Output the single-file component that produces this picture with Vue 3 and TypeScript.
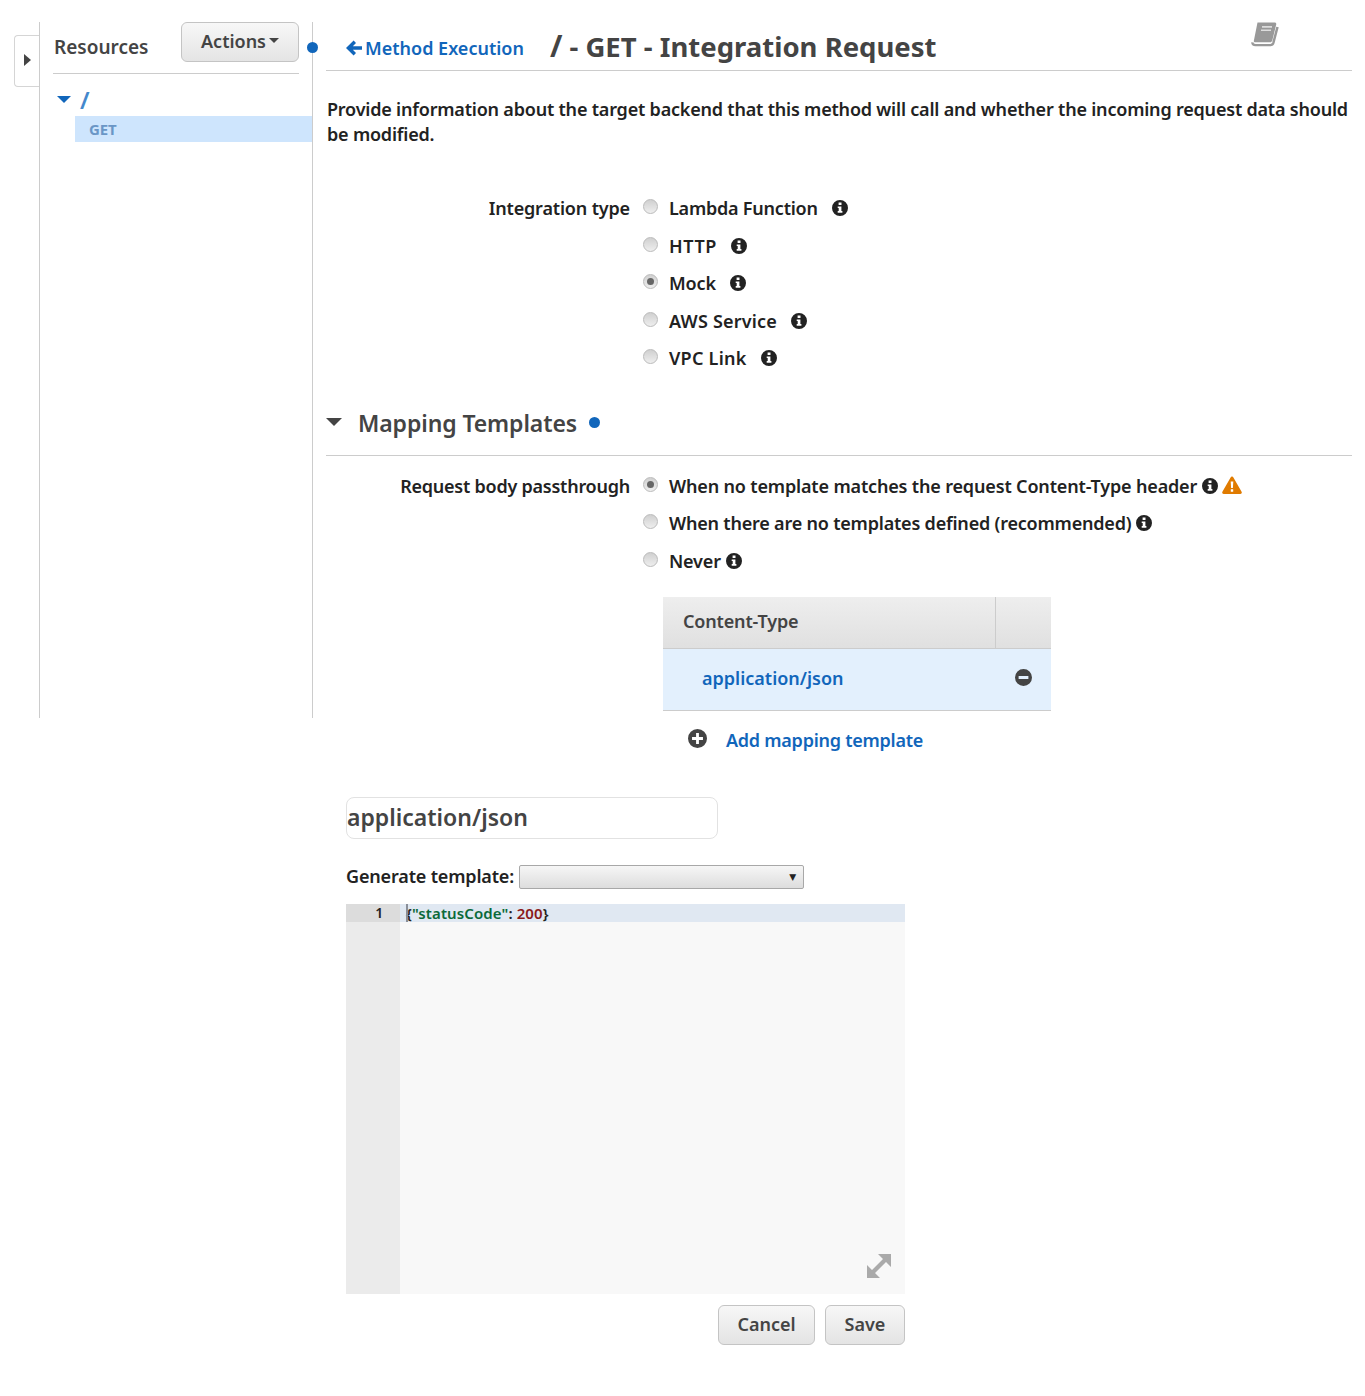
<script setup lang="ts">
import { ref } from "vue";

interface Option {
  label: string;
  tracking?: string;
  warn?: boolean;
}

// the fallback font runs a bit off per label, so each row carries its own tracking
const integrationTypes: Option[] = [
  { label: "Lambda Function", tracking: "-0.22px" },
  { label: "HTTP", tracking: "0.6px" },
  { label: "Mock" },
  { label: "AWS Service", tracking: "0.2px" },
  { label: "VPC Link", tracking: "0.25px" },
];

const passthroughOptions: Option[] = [
  { label: "When no template matches the request Content-Type header", warn: true },
  { label: "When there are no templates defined (recommended)", tracking: "-0.2px" },
  { label: "Never" },
];

const integrationType = ref("Mock");
const passthrough = ref(passthroughOptions[0].label);
const templateName = ref("application/json");
</script>

<template>
  <svg class="defs" aria-hidden="true">
    <symbol id="icon-info" viewBox="0 0 16 16">
      <path
        fill-rule="evenodd"
        d="M8 0a8 8 0 1 1 0 16A8 8 0 0 1 8 0ZM6.600 2.600v2.500h2.900V2.600ZM5.700 6.400v1.600h1v3.100h-1v1.600h4.700v-1.600h-1V6.400Z"
      />
    </symbol>
    <symbol id="icon-minus" viewBox="0 0 16 16">
      <path fill-rule="evenodd" d="M8 0a8 8 0 1 1 0 16A8 8 0 0 1 8 0ZM3.400 6.600v2.800h9.200V6.600Z" />
    </symbol>
    <symbol id="icon-plus" viewBox="0 0 16 16">
      <path
        fill-rule="evenodd"
        d="M8 0a8 8 0 1 1 0 16A8 8 0 0 1 8 0ZM6.800 3.400v3.400H3.400v2.400h3.400v3.400h2.400V9.200h3.400V6.800H9.200V3.400Z"
      />
    </symbol>
  </svg>

  <div class="page">
    <div class="drawer-tab">
      <span class="tab-arrow"></span>
    </div>

    <aside class="sidebar">
      <div class="sidebar-head">
        <h2 class="sidebar-title">Resources</h2>
        <button class="btn actions" type="button">Actions<span class="caret"></span></button>
      </div>
      <div class="tree-root">
        <span class="tree-arrow"></span>
        <a class="tree-slash">/</a>
      </div>
      <div class="tree-method">GET</div>
      <span class="rail-dot"></span>
    </aside>

    <main class="main">
      <header class="title-bar">
        <a class="back-link">
          <svg class="back-icon" viewBox="0 0 16 16">
            <path d="M7.600 .6 0 8l7.600 7.400 2.400-2.400L6.800 9.800H16V6.200H6.800L10 3Z" />
          </svg>
          Method Execution
        </a>
        <h1 class="page-title"><span class="title-slash">/</span> - GET - Integration Request</h1>
        <svg class="book" viewBox="0 0 30 28" preserveAspectRatio="none">
          <path
            d="M7.500 1.500h17c1.400 0 2.100 1 1.700 2.300L22.300 21c-.4 1.300-1.500 2-2.800 2H5.500c-1.500 0-2-.9-1.600-2.100Z"
            fill="#999"
          />
          <path
            d="M27.500 6.500 23.400 23.500c-.4 1.500-1.600 2.500-3.200 2.500H5.500c-2 0-3.300-1.200-3-3"
            fill="none"
            stroke="#999"
            stroke-width="2.500"
          />
          <path d="M12 6.300h10M11 10h10" stroke="#ddd" stroke-width="1.700" />
        </svg>
      </header>

      <p class="intro">
        Provide information about the target backend that this method will call and whether the incoming request data
        should be modified.
      </p>

      <section class="form-group integration">
        <div class="form-label">Integration type</div>
        <div class="options">
          <label v-for="opt in integrationTypes" :key="opt.label" class="option">
            <input v-model="integrationType" class="radio" type="radio" name="integration" :value="opt.label" />
            <span :style="{ letterSpacing: opt.tracking }">{{ opt.label }}</span>
            <svg class="info wide"><use href="#icon-info" /></svg>
          </label>
        </div>
      </section>

      <div class="section-head">
        <span class="section-arrow"></span>
        <h3 class="section-title">Mapping Templates</h3>
        <span class="section-dot"></span>
      </div>

      <section class="form-group passthrough">
        <div class="form-label">Request body passthrough</div>
        <div class="options">
          <label v-for="opt in passthroughOptions" :key="opt.label" class="option">
            <input v-model="passthrough" class="radio" type="radio" name="passthrough" :value="opt.label" />
            <span :style="{ letterSpacing: opt.tracking }">{{ opt.label }}</span>
            <svg class="info"><use href="#icon-info" /></svg>
            <svg v-if="opt.warn" class="warn" viewBox="0 0 20 18">
              <path
                d="M10 .5c.7 0 1.100.4 1.400 1l8.200 14.300c.6 1-.1 2.200-1.200 2.200H1.600C.5 18-.2 16.800.4 15.800L8.600 1.500c.3-.6.700-1 1.400-1Z"
                fill="#e07b00"
              />
              <path d="M8.700 5.500h2.600l-.4 6.500H9.100ZM8.800 13.300h2.400v2.400H8.800Z" fill="#fff" />
            </svg>
          </label>
        </div>
      </section>

      <div class="content-types">
        <div class="ct-head">
          <div class="ct-head-cell">Content-Type</div>
          <div class="ct-head-action"></div>
        </div>
        <div class="ct-row">
          <a class="ct-link">application/json</a>
          <svg class="ct-remove"><use href="#icon-minus" /></svg>
        </div>
      </div>
      <div class="add-template">
        <svg class="add-icon"><use href="#icon-plus" /></svg>
        <a class="add-link">Add mapping template</a>
      </div>

      <div class="template-editor">
        <input v-model="templateName" class="template-name" type="text" />
        <div class="generate">
          <label class="generate-label">Generate template:</label>
          <div class="select-box"><span class="select-arrow">▼</span></div>
        </div>
        <div class="code">
          <div class="gutter"><div class="gutter-active">1</div></div>
          <div class="code-body">
            <div class="code-line">
              <span class="cursor"></span>{<span class="code-key">"statusCode"</span>:
              <span class="code-num">200</span>}
            </div>
            <svg class="expand" viewBox="0 0 24 24">
              <path d="M11 0H24V13L19 8 8 19 13 24H0V11L5 16 16 5Z" />
            </svg>
          </div>
        </div>
        <div class="footer-buttons">
          <button class="btn cancel" type="button">Cancel</button>
          <button class="btn save" type="button">Save</button>
        </div>
      </div>
    </main>
  </div>
</template>

<style>
body {
  background: #fff;
}
</style>

<style scoped>
.defs {
  position: absolute;
  width: 0;
  height: 0;
}

.page {
  display: flex;
  align-items: flex-start;
  height: 1396px;
  padding: 22px 13px 0 14px;
  box-sizing: border-box;
  font-family: "Noto Sans", "Open Sans", sans-serif;
  font-weight: 600;
  font-size: 18px;
  letter-spacing: -0.16px;
  color: #222;
}

a {
  color: #1166bb;
}

.drawer-tab {
  flex: none;
  width: 15px;
  height: 50px;
  margin-top: 13px;
  padding-left: 9px;
  border: 1px solid #d5d5d5;
  border-right: 0;
  border-radius: 4px 0 0 4px;
  display: flex;
  align-items: center;
}

.tab-arrow {
  width: 0;
  height: 0;
  margin-top: -2px;
  border-left: 7px solid #444;
  border-top: 6px solid transparent;
  border-bottom: 6px solid transparent;
}

.sidebar {
  position: relative;
  flex: none;
  width: 274px;
  height: 696px;
  box-sizing: border-box;
  border-left: 1px solid #ccc;
  border-right: 1px solid #ccc;
  padding-left: 13px;
  margin-right: 13px;
}

.sidebar-head {
  display: flex;
  justify-content: space-between;
  align-items: flex-start;
  width: 246px;
  height: 52px;
  border-bottom: 1px solid #ccc;
  box-sizing: border-box;
}

.sidebar-title {
  margin: 11px 0 0 1px;
  font-size: 19px;
  font-weight: 600;
  line-height: 28px;
  letter-spacing: 0;
  color: #444;
}

.btn {
  font-family: inherit;
  font-weight: 600;
  font-size: 18px;
  color: #444;
  border: 1px solid #c4c4c4;
  border-radius: 6px;
  background: linear-gradient(#f7f7f7, #e4e4e4);
  padding: 0 0 2px;
  height: 40px;
  box-sizing: border-box;
}

.actions {
  width: 118px;
  display: flex;
  align-items: center;
  justify-content: center;
  padding-bottom: 3px;
}

.caret {
  margin-left: 3px;
  width: 0;
  height: 0;
  border-top: 5px solid #444;
  border-left: 5px solid transparent;
  border-right: 5px solid transparent;
}

.tree-root {
  display: flex;
  align-items: center;
  height: 42px;
  padding: 9px 0 0 4px;
  box-sizing: border-box;
}

.tree-arrow {
  width: 0;
  height: 0;
  border-top: 7px solid #1166bb;
  border-left: 7px solid transparent;
  border-right: 7px solid transparent;
  margin-right: 9px;
}

.tree-slash {
  font-size: 24px;
  line-height: 28px;
  color: #4488cc;
}

.tree-method {
  height: 26px;
  line-height: 26px;
  margin-left: 22px;
  padding-left: 14px;
  background: #cee5fd;
  color: #6a96c6;
  font-size: 15px;
  font-weight: 700;
}

.rail-dot {
  position: absolute;
  right: -6px;
  top: 20px;
  width: 11px;
  height: 11px;
  border-radius: 50%;
  background: #1166bb;
}

.main {
  flex: 1;
  min-width: 0;
}

.title-bar {
  position: relative;
  display: flex;
  align-items: flex-end;
  height: 49px;
  border-bottom: 1px solid #ccc;
  box-sizing: border-box;
  padding-left: 20px;
}

.back-link {
  display: flex;
  align-items: center;
  font-size: 18px;
  line-height: 24px;
  letter-spacing: 0;
  margin-bottom: 10px;
}

.back-icon {
  width: 16px;
  height: 16px;
  fill: #1166bb;
  margin-right: 3px;
}

.page-title {
  margin: 0 0 5px 26px;
  font-size: 27.5px;
  line-height: 36px;
  font-weight: 700;
  letter-spacing: 0;
  color: #444;
}

.title-slash {
  font-size: 30px;
}

.book {
  position: absolute;
  left: 924px;
  top: -1px;
  width: 30px;
  height: 26px;
}

.intro {
  margin: 0;
  padding: 26px 0 0 1px;
  height: 98px;
  line-height: 25px;
  font-size: 18px;
  letter-spacing: -0.2px;
  color: #222;
}

.form-group {
  display: flex;
}

.form-label {
  width: 304px;
  line-height: 26px;
  text-align: right;
  flex: none;
}

.passthrough .form-label {
  letter-spacing: -0.24px;
}

.options {
  margin-left: 13px;
}

.option {
  display: flex;
  align-items: center;
  height: 26px;
  margin-bottom: 11.5px;
}

.radio {
  appearance: none;
  width: 15px;
  height: 15px;
  margin: -3px 11px 0 0;
  flex: none;
  border: 1px solid #bbb;
  border-radius: 50%;
  background: linear-gradient(#d0d0d0, #eeeeee);
  position: relative;
}

.radio:checked::after {
  content: "";
  position: absolute;
  left: 3px;
  top: 3px;
  width: 7px;
  height: 7px;
  border-radius: 50%;
  background: #666;
}

.info {
  width: 16px;
  height: 16px;
  margin-left: 5px;
  fill: #222;
  flex: none;
}

.info.wide {
  margin-left: 14px;
}

.warn {
  width: 20px;
  height: 18px;
  margin-left: 4px;
  margin-top: -2px;
}

.section-head {
  display: flex;
  align-items: center;
  height: 32px;
  border-bottom: 1px solid #ccc;
  margin-top: 24px;
  padding-bottom: 16px;
}

.section-arrow {
  width: 0;
  height: 0;
  border-top: 8px solid #444;
  border-left: 8px solid transparent;
  border-right: 8px solid transparent;
  margin-right: 16px;
  margin-top: -2px;
}

.section-title {
  margin: 0;
  font-size: 23px;
  font-weight: 600;
  color: #444;
  line-height: 32px;
  letter-spacing: -0.1px;
}

.section-dot {
  width: 11px;
  height: 11px;
  border-radius: 50%;
  background: #1166bb;
  margin-left: 12px;
}

.passthrough {
  margin-top: 17px;
}

.content-types {
  width: 388px;
  margin-left: 337px;
  margin-top: 12px;
}

.ct-head {
  display: flex;
  height: 52px;
  background: linear-gradient(#eeeeee, #e0e0e0);
  border-bottom: 1px solid #ccc;
  box-sizing: border-box;
}

.ct-head-cell {
  width: 333px;
  box-sizing: border-box;
  padding-left: 20px;
  line-height: 48px;
  color: #444;
  border-right: 1px solid #ccc;
}

.ct-row {
  display: flex;
  align-items: center;
  justify-content: space-between;
  height: 62px;
  padding: 0 19px 4px 39px;
  box-sizing: border-box;
  background: #e3f0fd;
  border-bottom: 1px solid #ccc;
}

.ct-link {
  letter-spacing: 0;
}

.ct-remove {
  width: 17px;
  height: 17px;
  fill: #444;
}

.add-template {
  display: flex;
  align-items: center;
  height: 30px;
  margin: 15px 0 0 362px;
}

.add-icon {
  width: 19px;
  height: 19px;
  fill: #444;
  margin: -5px 19px 0 0;
}

.add-link {
  letter-spacing: -0.25px;
  padding-bottom: 2px;
}

.template-editor {
  margin-left: 20px;
  width: 559px;
  margin-top: 41px;
}

.template-name {
  display: block;
  width: 372px;
  height: 42px;
  box-sizing: border-box;
  border: 1px solid #e2e2e2;
  border-radius: 8px;
  padding: 0 0 2px;
  font-family: inherit;
  font-weight: 600;
  font-size: 23px;
  color: #444;
  outline: none;
}

.generate {
  display: flex;
  align-items: center;
  height: 24px;
  margin-top: 26px;
}

.generate-label {
  width: 173px;
  padding-bottom: 2px;
}

.select-box {
  position: relative;
  width: 285px;
  height: 24px;
  box-sizing: border-box;
  border: 1px solid #a8a8a8;
  border-radius: 2px;
  background: linear-gradient(#f6f6f6, #dddddd);
}

.select-arrow {
  position: absolute;
  right: 7px;
  top: 5px;
  font-size: 9px;
  line-height: 12px;
  color: #222;
  font-family: "DejaVu Sans", sans-serif;
}

.code {
  display: flex;
  height: 390px;
  margin-top: 15px;
  background: #f8f8f8;
}

.gutter {
  width: 54px;
  flex: none;
  background: #ebebeb;
}

.gutter-active {
  height: 18px;
  line-height: 18px;
  background: #dcdcdc;
  text-align: right;
  padding-right: 17px;
  font-size: 14px;
}

.code-body {
  position: relative;
  flex: 1;
}

.code-line {
  height: 18px;
  line-height: 18px;
  padding-left: 6px;
  background: #e0e8f2;
  font-size: 15px;
  letter-spacing: 0.1px;
  color: #222;
  position: relative;
}

.cursor {
  position: absolute;
  left: 6px;
  top: 0;
  width: 2px;
  height: 18px;
  background: #8a8f99;
}

.code-key {
  color: #0b6a3a;
}

.code-num {
  color: #8b1a1a;
}

.expand {
  position: absolute;
  right: 14px;
  bottom: 16px;
  width: 24px;
  height: 24px;
  fill: #aaa;
}

.footer-buttons {
  display: flex;
  justify-content: flex-end;
  gap: 10px;
  margin-top: 11px;
}

.cancel {
  width: 97px;
}

.save {
  width: 80px;
}
</style>
